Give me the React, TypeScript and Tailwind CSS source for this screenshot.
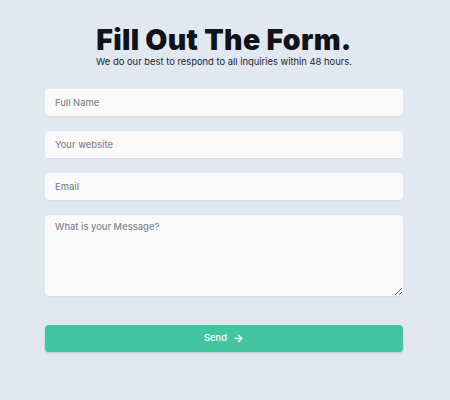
import { ArrowRight } from 'lucide-react'

export default function App() {
  return (
    <div
      className="min-h-[400px] w-[450px] bg-[#e2e8f0] pl-[45px] pr-[47px] pt-[25px]"
      style={{ fontFamily: '"Inter", "Noto Sans", sans-serif' }}
    >
      <div className="text-center">
        <h1 className="text-[28.5px] font-black leading-[30px] tracking-[0.3px] text-[#111318]">
          Fill Out The Form.
        </h1>
        <p className="text-[9.4px] leading-[13px] text-[#1f2430]">
          We do our best to respond to all inquiries within 48 hours.
        </p>
      </div>

      <form className="mt-[21px] flex flex-col" onSubmit={e => e.preventDefault()}>
        <input
          placeholder="Full Name"
          className="h-[27px] w-full rounded-[4px] bg-[#fafafa] px-[10px] text-[9.4px] font-medium text-[#374151] outline-none placeholder:text-[#838893] shadow-[0_1px_1px_rgba(0,0,0,0.04)]"
        />
        <input
          placeholder="Your website"
          className="mt-[15px] h-[27px] w-full rounded-[4px] bg-[#fafafa] px-[10px] text-[9.4px] font-medium text-[#374151] outline-none placeholder:text-[#838893] shadow-[0_1px_1px_rgba(0,0,0,0.04)]"
        />
        <input
          placeholder="Email"
          className="mt-[15px] h-[27px] w-full rounded-[4px] bg-[#fafafa] px-[10px] text-[9.4px] font-medium text-[#374151] outline-none placeholder:text-[#838893] shadow-[0_1px_1px_rgba(0,0,0,0.04)]"
        />
        <textarea
          placeholder="What is your Message?"
          className="mt-[15px] h-[81px] w-full rounded-[4px] bg-[#fafafa] px-[10px] py-[5px] text-[9.4px] font-medium text-[#374151] outline-none placeholder:text-[#838893] shadow-[0_1px_1px_rgba(0,0,0,0.04)]"
        />
        <button
          type="submit"
          className="mt-[29px] flex h-[27px] w-full items-center justify-center gap-[6px] rounded-[4px] bg-[#43c6a0] text-[9.4px] font-medium text-white shadow-[0_1px_2px_rgba(0,0,0,0.15)]"
        >
          Send
          <ArrowRight size={11} strokeWidth={2.75} />
        </button>
      </form>
    </div>
  )
}
